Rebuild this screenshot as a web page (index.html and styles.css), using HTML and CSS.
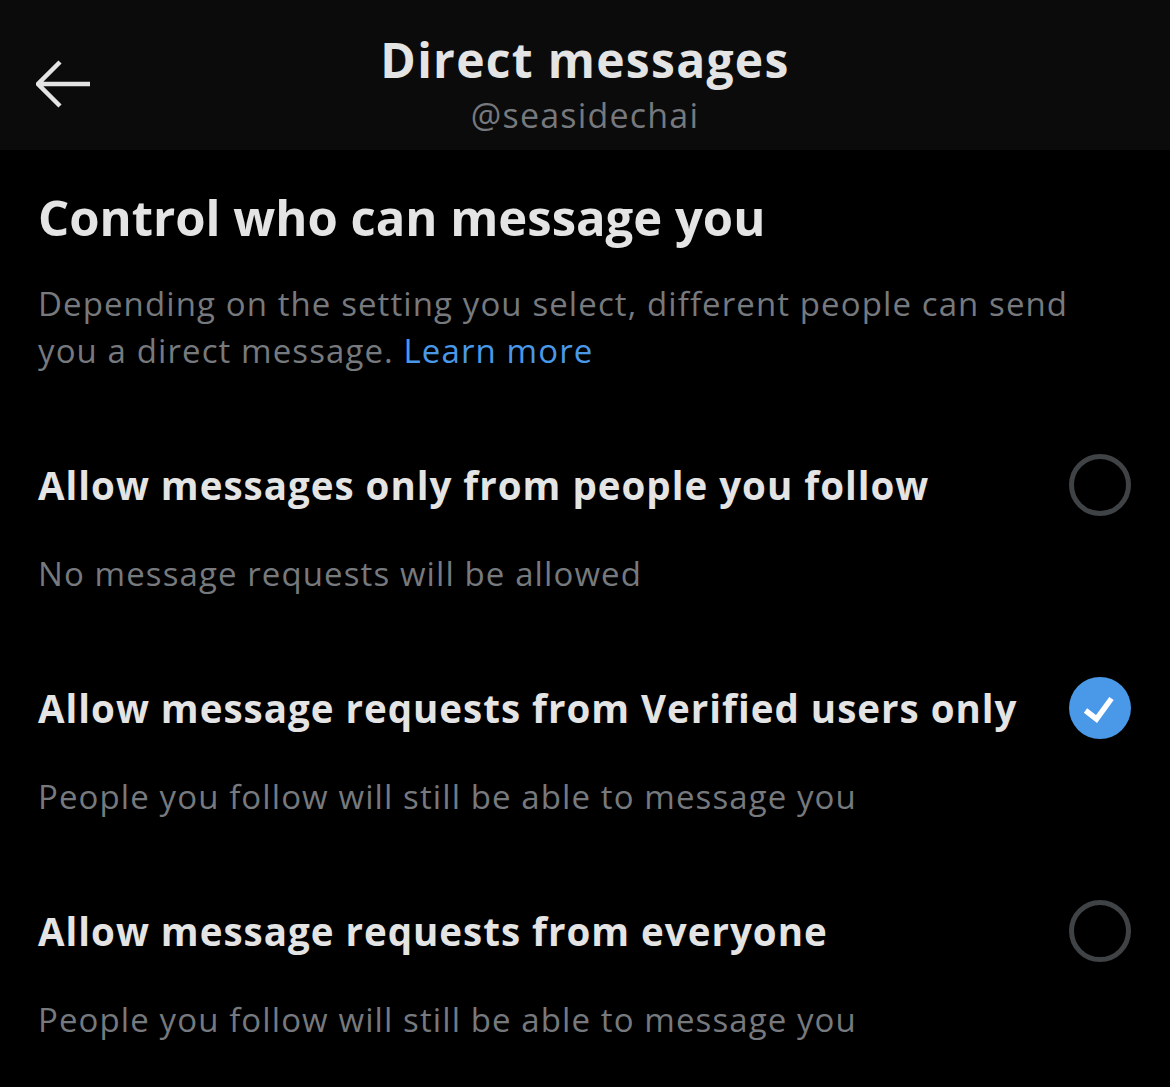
FILE: index.html
```html
<!DOCTYPE html>
<html lang="en">
<head>
  <meta charset="UTF-8">
  <meta name="viewport" content="width=device-width, initial-scale=1.0">
  <title>Direct messages</title>
  <link rel="stylesheet" href="styles.css">
</head>
<body>
  <header class="top-bar">
    <button class="back-btn" aria-label="Back">
      <svg viewBox="0 0 56 48" width="56" height="48">
        <path d="M2 24H54M24 2L2 24L24 46" fill="none" stroke="currentColor" stroke-width="4.5"/>
      </svg>
    </button>
    <div class="top-title">
      <h1>Direct messages</h1>
      <div class="handle">@seasidechai</div>
    </div>
  </header>

  <main class="content">
    <h2>Control who can message you</h2>
    <p class="intro">Depending on the setting you select, different people can send you a direct message. <a href="#">Learn more</a></p>

    <div class="options">
      <div class="option">
        <div class="option-row">
          <span class="option-title">Allow messages only from people you follow</span>
          <span class="radio"></span>
        </div>
        <div class="option-desc">No message requests will be allowed</div>
      </div>

      <div class="option">
        <div class="option-row">
          <span class="option-title">Allow message requests from Verified users only</span>
          <span class="radio checked">
            <svg viewBox="0 0 62 62" width="62" height="62">
              <path d="M16.5 33.5L27.5 42L42.5 21.5" fill="none" stroke="#fff" stroke-width="5.5"/>
            </svg>
          </span>
        </div>
        <div class="option-desc">People you follow will still be able to message you</div>
      </div>

      <div class="option">
        <div class="option-row">
          <span class="option-title">Allow message requests from everyone</span>
          <span class="radio"></span>
        </div>
        <div class="option-desc">People you follow will still be able to message you</div>
      </div>
    </div>
  </main>
</body>
</html>
```

FILE: styles.css
```css
:root {
  --text-color: #e4e4e4;
  --muted-color: #76797d;
  --accent-color: #4a99e9;
  --header-bg: #0b0b0b;
  --background-color: #000000;
  --radio-border: #404346;
}

body {
  font-family: 'Open Sans', 'Liberation Sans', sans-serif;
  background-color: var(--background-color);
  color: var(--text-color);
  margin: 0;
  padding: 0;
}

.top-bar {
  height: 150px;
  box-sizing: border-box;
  padding-top: 36px;
  background-color: var(--header-bg);
  position: relative;
}

.back-btn {
  position: absolute;
  left: 36px;
  top: 60px;
  background: none;
  border: none;
  padding: 0;
  color: var(--text-color);
  display: flex;
}

.top-title {
  text-align: center;
}

.top-title h1 {
  margin: 0;
  font-size: 48px;
  font-weight: 700;
  line-height: 48px;
  letter-spacing: 1.3px;
}

.handle {
  margin-top: 11px;
  font-size: 34px;
  line-height: 40px;
  letter-spacing: 1.2px;
  color: var(--muted-color);
}

.content {
  padding: 0 39px 0 38px;
}

h2 {
  margin: 0;
  padding-top: 37px;
  font-size: 49px;
  font-weight: 700;
  line-height: 60px;
}

.intro {
  margin: 33px 0 0;
  font-size: 33px;
  line-height: 47px;
  letter-spacing: 1.1px;
  color: var(--muted-color);
}

.intro a {
  color: var(--accent-color);
  text-decoration: none;
}

.options {
  margin-top: 80px;
}

.option {
  height: 223px;
}

.option-row {
  display: flex;
  align-items: center;
  justify-content: space-between;
  height: 62px;
}

.option-title {
  font-size: 38.5px;
  font-weight: 700;
  line-height: 62px;
  letter-spacing: 1px;
}

.option-desc {
  margin-top: 38px;
  font-size: 33px;
  line-height: 40px;
  letter-spacing: 1.1px;
  color: var(--muted-color);
}

.radio {
  width: 62px;
  height: 62px;
  box-sizing: border-box;
  border: 5px solid var(--radio-border);
  border-radius: 50%;
  flex-shrink: 0;
}

.radio.checked {
  background-color: var(--accent-color);
  border: none;
}
```
